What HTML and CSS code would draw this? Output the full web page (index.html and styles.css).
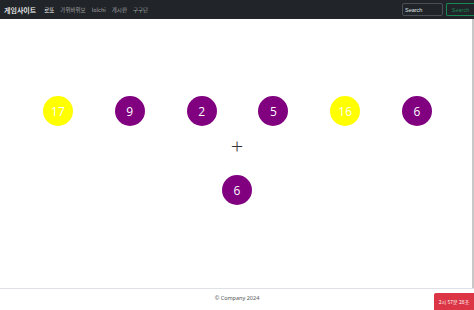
FILE: index.html
```html
<!DOCTYPE html>
<html lang="ko">
<head>
<meta charset="utf-8">
<link rel="stylesheet" href="styles.css">
</head>
<body>
<div class="page">
  <nav class="navbar">
    <span class="brand">게임사이트</span>
    <ul class="links">
      <li class="active">로또</li>
      <li>가위바위보</li>
      <li>lolchi</li>
      <li>게시판</li>
      <li>구구단</li>
    </ul>
    <form class="search">
      <input class="search-input" type="text" placeholder="Search">
      <button class="search-btn" type="button">Search</button>
    </form>
  </nav>
  <main class="main">
    <div class="balls">
      <div class="ball yellow">17</div>
      <div class="ball purple">9</div>
      <div class="ball purple">2</div>
      <div class="ball purple">5</div>
      <div class="ball yellow">16</div>
      <div class="ball purple">6</div>
    </div>
    <div class="plus">+</div>
    <div class="bonus">
      <div class="ball purple">6</div>
    </div>
  </main>
  <footer class="footer">© Company 2024</footer>
</div>
<div class="timer">2시 57분 28초</div>
</body>
</html>
```
FILE: styles.css
```css
* { box-sizing: border-box; }
html, body { margin: 0; padding: 0; }
body {
  font-family: "Noto Sans CJK KR", "Noto Sans", sans-serif;
  background: #fff;
  color: #212529;
  width: 474px;
  height: 310px;
  overflow: hidden;
}
.page {
  display: flex;
  flex-direction: column;
  height: 310px;
}
.navbar {
  background: #212529;
  height: 19px;
  display: flex;
  align-items: center;
  padding: 0 0 0 4px;
}
.brand {
  color: #fff;
  font-size: 7px;
  font-weight: 500;
  margin-right: 8px;
}
.links {
  list-style: none;
  display: flex;
  gap: 6px;
  margin: 0;
  padding: 0;
  font-size: 5.5px;
  color: rgba(255,255,255,0.55);
}
.links .active { color: #fff; }
.search {
  margin-left: auto;
  display: flex;
  gap: 3px;
  align-items: center;
}
.search-input {
  width: 41px;
  height: 13px;
  background: #212529;
  border: 1px solid #495057;
  border-radius: 2px;
  color: #dee2e6;
  font-size: 5.5px;
  padding: 0 2px;
  font-family: "Liberation Sans", sans-serif;
}
.search-input::placeholder { color: #dee2e6; }
.search-btn {
  width: 28px;
  height: 13px;
  background: transparent;
  border: 1px solid #198754;
  border-radius: 2px 0 0 2px;
  border-right: none;
  color: #198754;
  font-size: 5.5px;
  padding: 0;
  font-family: "Liberation Sans", sans-serif;
}
.main {
  flex: 1;
  display: flex;
  flex-direction: column;
  align-items: center;
  padding-top: 77px;
  padding-left: 2px;
  border-right: 2px solid #c8c8c8;
}
.balls {
  align-self: stretch;
  display: flex;
  justify-content: space-around;
  padding: 0 19px 0 20px;
}
.ball {
  width: 30px;
  height: 30px;
  border-radius: 50%;
  display: flex;
  align-items: center;
  justify-content: center;
  color: #fff;
  font-size: 12px;
  font-family: "Open Sans", "Noto Sans", sans-serif;
}
.yellow { background: #ffff00; }
.purple { background: #800080; }
.plus {
  font-size: 22px;
  font-weight: 300;
  line-height: 22px;
  margin-top: 8px;
  color: #333;
  font-family: "Open Sans", sans-serif;
}
.bonus { margin-top: 19px; }
.footer {
  height: 22px;
  border-top: 1px solid #dee2e6;
  display: flex;
  align-items: center;
  justify-content: center;
  padding-bottom: 4px;
  font-size: 5.5px;
  color: #555;
  font-family: "Noto Sans", sans-serif;
}
.timer {
  position: fixed;
  right: 0;
  bottom: 0;
  width: 40px;
  height: 17px;
  background: #dc3545;
  color: #fff;
  font-size: 5px;
  display: flex;
  align-items: center;
  justify-content: center;
  border-radius: 2px 0 0 0;
}
```
